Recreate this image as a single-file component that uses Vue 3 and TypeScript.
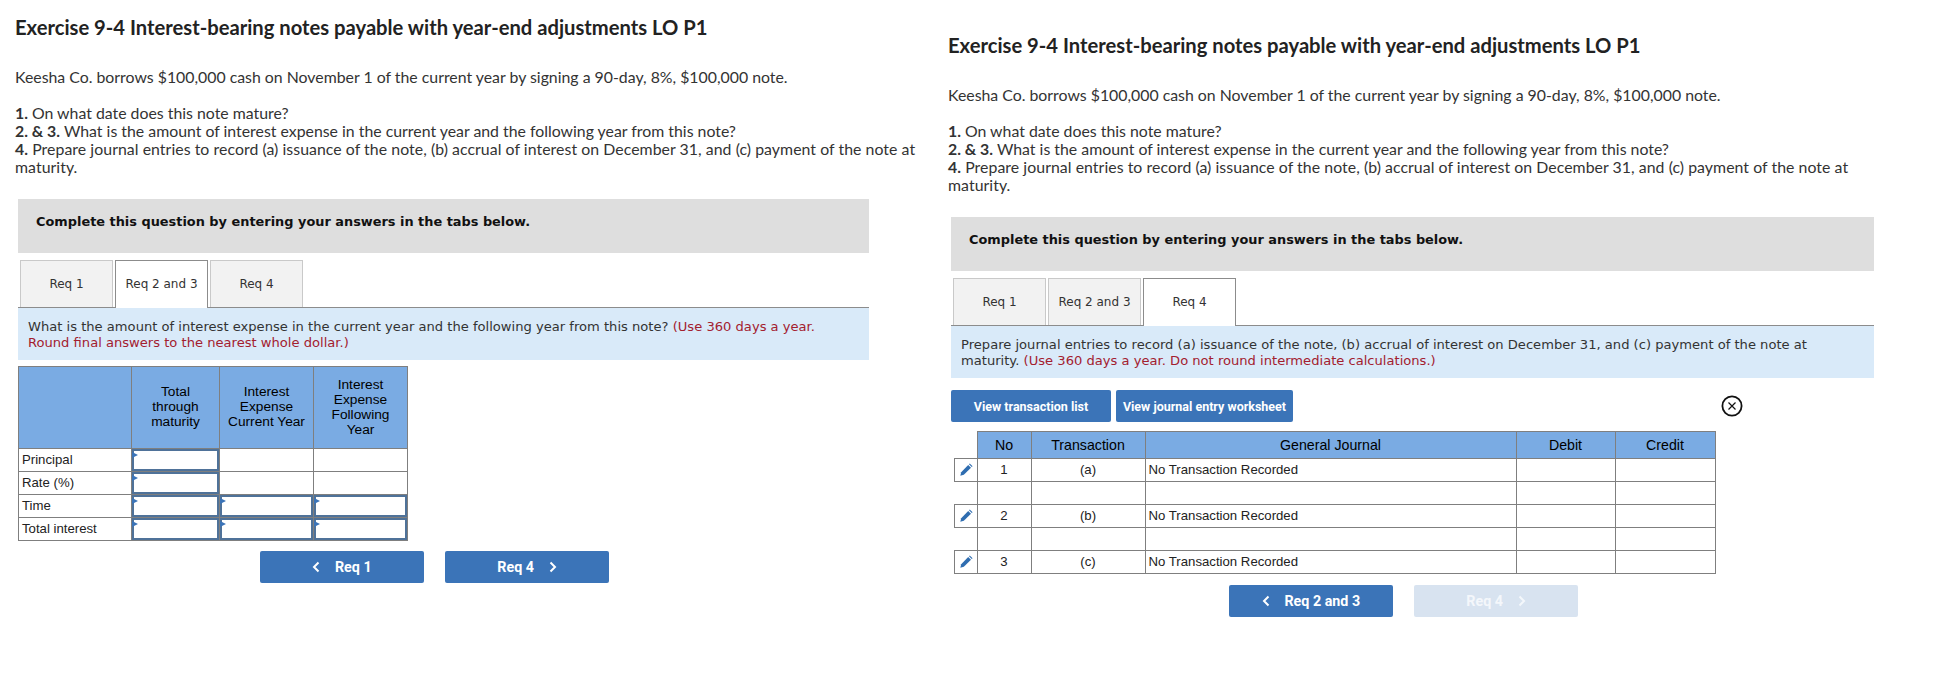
<template>
  <div class="page">
    <!-- Req 2 and 3 -->
    <section class="panel">
      <h1>{{ title }}</h1>
      <p class="lead">{{ lead }}</p>
      <ol class="questions">
        <li v-for="q in questions" :key="q.num"><b>{{ q.num }}</b> {{ q.text }}</li>
      </ol>
      <div class="notice">Complete this question by entering your answers in the tabs below.</div>

      <div class="tabs">
        <div v-for="t in tabs" :key="t" class="tab" :class="{ active: t === 'Req 2 and 3' }">{{ t }}</div>
      </div>
      <div class="prompt">
        What is the amount of interest expense in the current year and the following year from this note?
        <span class="hint">(Use 360 days a year. Round final answers to the nearest whole dollar.)</span>
      </div>

      <table class="grid interest">
        <colgroup>
          <col style="width: 113px" />
          <col style="width: 88px" />
          <col style="width: 94px" />
          <col style="width: 94px" />
        </colgroup>
        <thead>
          <tr>
            <th></th>
            <th>Total<br />through<br />maturity</th>
            <th>Interest<br />Expense<br />Current Year</th>
            <th>Interest<br />Expense<br />Following<br />Year</th>
          </tr>
        </thead>
        <tbody>
          <tr v-for="row in interestRows" :key="row.label">
            <td class="label">{{ row.label }}</td>
            <td v-for="(open, i) in row.inputs" :key="i" class="cell">
              <div v-if="open" class="field"></div>
            </td>
          </tr>
        </tbody>
      </table>

      <div class="nav">
        <button class="nav-btn">
          <svg class="chev" viewBox="0 0 8 12" width="8" height="12"><path d="M6.5 1.5L2 6l4.5 4.5" /></svg>
          Req 1
        </button>
        <button class="nav-btn">
          Req 4
          <svg class="chev after" viewBox="0 0 8 12" width="8" height="12"><path d="M1.5 1.5L6 6l-4.5 4.5" /></svg>
        </button>
      </div>
    </section>

    <!-- Req 4 -->
    <section class="panel second">
      <h1>{{ title }}</h1>
      <p class="lead">{{ lead }}</p>
      <ol class="questions">
        <li v-for="q in questions" :key="q.num"><b>{{ q.num }}</b> {{ q.text }}</li>
      </ol>
      <div class="notice">Complete this question by entering your answers in the tabs below.</div>

      <div class="tabs">
        <div v-for="t in tabs" :key="t" class="tab" :class="{ active: t === 'Req 4' }">{{ t }}</div>
      </div>
      <div class="prompt">
        Prepare journal entries to record (a) issuance of the note, (b) accrual of interest on December 31, and (c) payment of the note at maturity.
        <span class="hint">(Use 360 days a year. Do not round intermediate calculations.)</span>
      </div>

      <div class="toolbar">
        <button class="tool-btn wide">View transaction list</button>
        <button class="tool-btn">View journal entry worksheet</button>
        <svg class="close" viewBox="0 0 22 22" width="22" height="22">
          <circle cx="11" cy="11" r="9.6" fill="none" stroke="#111" stroke-width="1.8" />
          <path d="M7.5 7.5l7 7M14.5 7.5l-7 7" fill="none" stroke="#111" stroke-width="1.2" />
        </svg>
      </div>

      <table class="grid journal">
        <colgroup>
          <col style="width: 23px" />
          <col style="width: 54px" />
          <col style="width: 114px" />
          <col style="width: 371px" />
          <col style="width: 99px" />
          <col style="width: 100px" />
        </colgroup>
        <thead>
          <tr>
            <th class="edit"></th>
            <th>No</th>
            <th>Transaction</th>
            <th>General Journal</th>
            <th>Debit</th>
            <th>Credit</th>
          </tr>
        </thead>
        <tbody>
          <tr v-for="(row, i) in journalRows" :key="i">
            <td class="edit">
              <div v-if="row.no" class="pencil">
                <svg viewBox="0 0 16 16" width="14" height="14">
                  <path d="M1.5 14.5l1-4 8-8.2 3.2 3.2-8.2 8z" fill="#2f6db0" />
                  <path d="M11.4 1.4l.9-.9 3.2 3.2-.9.9z" fill="#2f6db0" />
                </svg>
              </div>
            </td>
            <td class="center">{{ row.no }}</td>
            <td class="center">{{ row.tx }}</td>
            <td class="label">{{ row.no ? 'No Transaction Recorded' : '' }}</td>
            <td></td>
            <td></td>
          </tr>
        </tbody>
      </table>

      <div class="nav journal-nav">
        <button class="nav-btn">
          <svg class="chev" viewBox="0 0 8 12" width="8" height="12"><path d="M6.5 1.5L2 6l4.5 4.5" /></svg>
          Req 2 and 3
        </button>
        <button class="nav-btn off">
          Req 4
          <svg class="chev after" viewBox="0 0 8 12" width="8" height="12"><path d="M1.5 1.5L6 6l-4.5 4.5" /></svg>
        </button>
      </div>
    </section>
  </div>
</template>

<script setup lang="ts">
const title = 'Exercise 9-4 Interest-bearing notes payable with year-end adjustments LO P1'
const lead = 'Keesha Co. borrows $100,000 cash on November 1 of the current year by signing a 90-day, 8%, $100,000 note.'

const questions = [
  { num: '1.', text: 'On what date does this note mature?' },
  { num: '2. & 3.', text: 'What is the amount of interest expense in the current year and the following year from this note?' },
  { num: '4.', text: 'Prepare journal entries to record (a) issuance of the note, (b) accrual of interest on December 31, and (c) payment of the note at maturity.' }
]

const tabs = ['Req 1', 'Req 2 and 3', 'Req 4']

const interestRows = [
  { label: 'Principal', inputs: [true, false, false] },
  { label: 'Rate (%)', inputs: [true, false, false] },
  { label: 'Time', inputs: [true, true, true] },
  { label: 'Total interest', inputs: [true, true, true] }
]

const journalRows = [
  { no: '1', tx: '(a)' },
  { no: '', tx: '' },
  { no: '2', tx: '(b)' },
  { no: '', tx: '' },
  { no: '3', tx: '(c)' }
]
</script>

<style>
html,
body {
  background: #fff;
}
</style>

<style scoped>
.page {
  display: flex;
  align-items: flex-start;
  height: 684px;
  overflow: hidden;
  color: #333;
  font-family: 'Lato', 'Open Sans', sans-serif;
}

.panel {
  width: 933px;
  box-sizing: border-box;
  flex: none;
  padding: 15px 0 0 15px;
  --band: 851px;
}

.panel.second {
  width: 1010px;
  padding-top: 33px;
  --band: 923px;
}

h1 {
  margin: 0;
  font-size: 20.2px;
  line-height: 24px;
  font-weight: 700;
  color: #222;
}

.lead {
  margin: 29px 0 18px;
  font-size: 15.85px;
  line-height: 18px;
}

.questions {
  margin: 0;
  padding: 0;
  width: 918px;
  list-style: none;
  font-size: 15.85px;
  line-height: 18px;
}

.questions li:last-child {
  letter-spacing: 0.05px;
}

.notice {
  margin: 23px 0 7px 3px;
  width: var(--band);
  height: 54px;
  box-sizing: border-box;
  padding: 14px 18px;
  background: #dedede;
  color: #111;
  font-family: 'DejaVu Sans', Verdana, sans-serif;
  font-size: 12.9px;
  font-weight: 700;
  line-height: 18px;
}

.tabs {
  display: flex;
  gap: 2px;
  margin-left: 3px;
  width: var(--band);
  padding-left: 2px;
  box-sizing: border-box;
  border-bottom: 1px solid #8c8c8c;
}

.tab {
  width: 93px;
  height: 47px;
  box-sizing: border-box;
  display: flex;
  align-items: center;
  justify-content: center;
  background: #f2f2f2;
  border: 1px solid #c9c9c9;
  border-bottom: none;
  color: #333;
  font-family: 'DejaVu Sans', Verdana, sans-serif;
  font-size: 12px;
}

.tab.active {
  background: #fff;
  border-color: #8c8c8c;
  margin-bottom: -1px;
  height: 48px;
  padding-bottom: 1px;
}

.prompt {
  margin-left: 3px;
  width: var(--band);
  height: 52px;
  box-sizing: border-box;
  padding: 11px 10px 0;
  background: #d9eaf9;
  color: #333;
  font-family: 'DejaVu Sans', Verdana, sans-serif;
  font-size: 13.1px;
  line-height: 15.5px;
}

.hint {
  color: #a3202f;
}

.grid {
  margin-left: 3px;
  table-layout: fixed;
  border-collapse: collapse;
  color: #222;
  font-family: 'Liberation Sans', Arial, sans-serif;
  font-size: 13.2px;
}

.grid th {
  background: #7aabe3;
  border: 1px solid #7f7f7f;
  padding: 0 2px;
  font-weight: 400;
  font-size: 13.7px;
  line-height: 15px;
  text-align: center;
  color: #000;
}

.grid td {
  height: 21px;
  padding: 0 0 1px;
  border: 1px solid #7f7f7f;
}

.interest {
  margin-top: 6px;
}

.interest th {
  height: 79px;
  padding-bottom: 2px;
}

.label {
  padding-left: 3px !important;
}

.cell {
  position: relative;
}

.field {
  position: absolute;
  inset: 0;
  border: 2px solid #4f7299;
}

.field::before {
  content: '';
  position: absolute;
  top: 1px;
  left: -2px;
  border-left: 6px solid #3b74b8;
  border-top: 3.5px solid transparent;
  border-bottom: 3.5px solid transparent;
}

.nav {
  display: flex;
  justify-content: center;
  gap: 21px;
  margin: 10px 0 0 3px;
  width: var(--band);
  padding-right: 18px;
  box-sizing: border-box;
}

.journal-nav {
  margin-top: 11px;
}

.nav-btn {
  width: 164px;
  height: 32px;
  border: none;
  border-radius: 2px;
  background: #3b74b8;
  color: #fff;
  font-family: 'Roboto', 'Liberation Sans', sans-serif;
  font-size: 14.3px;
  font-weight: 700;
}

.nav-btn.off {
  background: #d8e3f0;
  color: #f4f7fb;
}

.chev {
  margin-right: 11px;
  vertical-align: -1px;
  fill: none;
  stroke: currentColor;
  stroke-width: 2;
}

.chev.after {
  margin: 0 0 0 11px;
}

.toolbar {
  display: flex;
  align-items: center;
  gap: 5px;
  margin: 12px 0 0 3px;
  width: var(--band);
  padding-right: 131px;
  box-sizing: border-box;
}

.tool-btn {
  width: 177px;
  height: 32px;
  padding: 0;
  border: none;
  border-radius: 2px;
  background: #3b74b8;
  color: #fff;
  font-family: 'Roboto', 'Liberation Sans', sans-serif;
  font-size: 12.5px;
  font-weight: 700;
}

.tool-btn.wide {
  width: 160px;
}

.close {
  margin-left: auto;
}

.journal {
  margin: 9px 0 0 6px;
}

.journal th {
  height: 26px;
  font-size: 14.2px;
}

.journal th.edit,
.journal td.edit {
  background: none;
  border: none;
  border-right: 1px solid #7f7f7f;
  position: relative;
}

.center {
  text-align: center;
}

.pencil {
  position: absolute;
  top: -1px;
  left: 0;
  width: 24px;
  height: 24px;
  box-sizing: border-box;
  display: flex;
  align-items: center;
  justify-content: center;
  border: 1px solid #7f7f7f;
  background: #fff;
}
</style>
